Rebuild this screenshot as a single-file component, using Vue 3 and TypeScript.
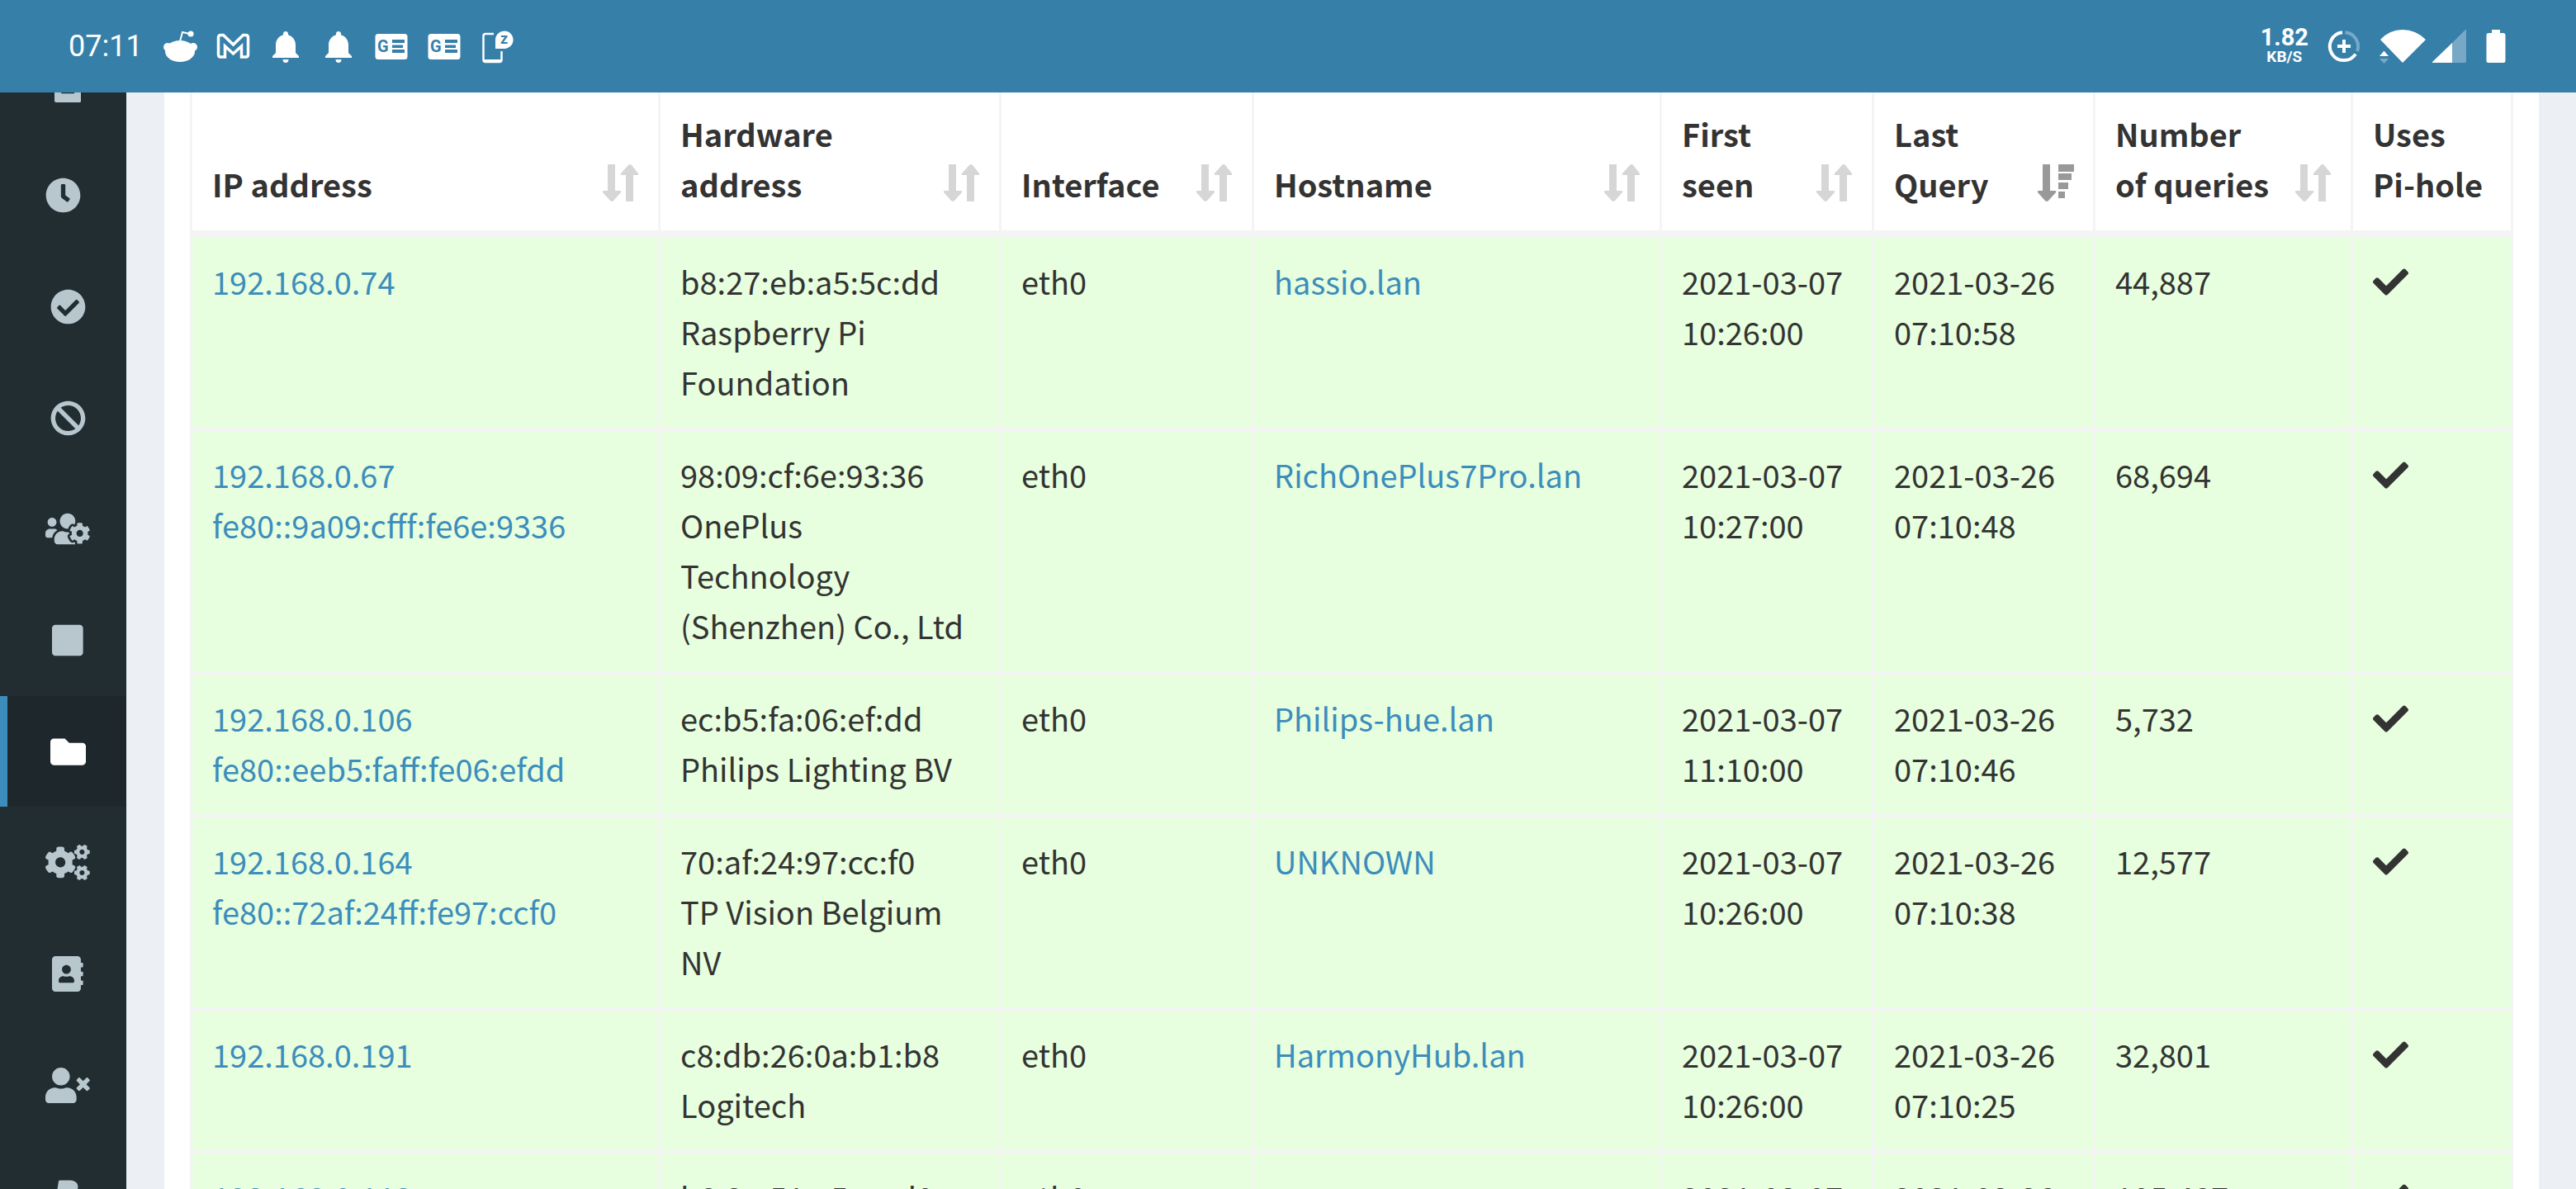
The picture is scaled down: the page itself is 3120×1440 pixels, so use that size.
<script setup lang="ts">
import { ref } from 'vue'

interface NavItem {
  label: string
  width: number
  path: string
  start?: boolean
}

interface Column {
  lines: string[]
  width: number
  sortable: boolean
}

interface Client {
  ips: string[]
  hardware: string[]
  iface: string
  host: string
  first: string[]
  last: string[]
  queries: string
}

const active = ref('Tools')
const sortedBy = ref(5)

const navItems: NavItem[] = [
  { label: 'Query log', width: 384, path: 'M224 136V0H24C10.7 0 0 10.7 0 24v464c0 13.3 10.7 24 24 24h336c13.3 0 24-10.7 24-24V160H248c-13.2 0-24-10.8-24-24zm64 236c0 6.6-5.4 12-12 12H108c-6.6 0-12-5.4-12-12v-8c0-6.6 5.4-12 12-12h168c6.6 0 12 5.4 12 12v8zm0-64c0 6.6-5.4 12-12 12H108c-6.6 0-12-5.4-12-12v-8c0-6.6 5.4-12 12-12h168c6.6 0 12 5.4 12 12v8z' },
  { label: 'Long-term data', width: 512, start: true, path: 'M256,8C119,8,8,119,8,256S119,504,256,504,504,393,504,256,393,8,256,8Zm92.49,313h0l-20,25a16,16,0,0,1-22.49,2.5h0l-67-49.72a40,40,0,0,1-15-31.23V112a16,16,0,0,1,16-16h32a16,16,0,0,1,16,16V256l58,42.5A16,16,0,0,1,348.49,321Z' },
  { label: 'Whitelist', width: 512, path: 'M504 256c0 136.967-111.033 248-248 248S8 392.967 8 256 119.033 8 256 8s248 111.033 248 248zM227.314 387.314l184-184c6.248-6.248 6.248-16.379 0-22.627l-22.627-22.627c-6.248-6.249-16.379-6.249-22.628 0L216 308.118l-70.059-70.059c-6.248-6.248-16.379-6.248-22.628 0l-22.627 22.627c-6.248 6.248-6.248 16.379 0 22.627l104 104c6.249 6.249 16.379 6.249 22.628.001z' },
  { label: 'Blacklist', width: 512, path: 'M256 8C119.034 8 8 119.033 8 256s111.034 248 248 248 248-111.034 248-248S392.967 8 256 8zm130.108 117.892c65.448 65.448 70 165.481 20.677 235.637L150.47 105.216c70.204-49.356 170.226-44.735 235.638 20.676zM125.892 386.108c-65.448-65.448-70-165.481-20.677-235.637L361.53 406.784c-70.203 49.356-170.226 44.736-235.638-20.676z' },
  { label: 'Group management', width: 640, path: 'M610.5 341.3c2.6-14.1 2.6-28.5 0-42.6l25.8-14.9c3-1.7 4.3-5.2 3.3-8.5-6.7-21.6-18.2-41.2-33.2-57.4-2.3-2.5-6-3.1-9-1.4l-25.8 14.9c-10.9-9.3-23.4-16.5-36.9-21.3v-29.8c0-3.4-2.4-6.4-5.7-7.1-22.3-5-45-4.8-66.2 0-3.3.7-5.7 3.7-5.7 7.1v29.8c-13.5 4.8-26 12-36.9 21.3l-25.8-14.9c-2.9-1.7-6.7-1.1-9 1.4-15 16.2-26.5 35.8-33.2 57.4-1 3.3.4 6.8 3.3 8.5l25.8 14.9c-2.6 14.1-2.6 28.5 0 42.6l-25.8 14.9c-3 1.7-4.3 5.2-3.3 8.5 6.7 21.6 18.2 41.1 33.2 57.4 2.3 2.5 6 3.1 9 1.4l25.8-14.9c10.9 9.3 23.4 16.5 36.9 21.3v29.8c0 3.4 2.4 6.4 5.7 7.1 22.3 5 45 4.8 66.2 0 3.3-.7 5.7-3.7 5.7-7.1v-29.8c13.5-4.8 26-12 36.9-21.3l25.8 14.9c2.9 1.7 6.7 1.1 9-1.4 15-16.2 26.5-35.8 33.2-57.4 1-3.3-.4-6.8-3.3-8.5l-25.8-14.9zM496 368.5c-26.8 0-48.5-21.8-48.5-48.5s21.8-48.5 48.5-48.5 48.5 21.8 48.5 48.5-21.7 48.5-48.5 48.5zM96 224c35.3 0 64-28.7 64-64s-28.7-64-64-64-64 28.7-64 64 28.7 64 64 64zm224 32c1.9 0 3.7-.5 5.6-.6 8.3-21.7 20.5-42.1 36.3-59.2 7.4-8 17.9-12.6 28.9-12.6 6.9 0 13.7 1.8 19.6 5.3l7.9 4.6c.8-.5 1.6-.9 2.4-1.4 7-14.6 11.2-30.8 11.2-48 0-61.9-50.1-112-112-112S208 82.1 208 144c0 61.9 50.1 112 112 112zm105.2 194.5c-2.3-1.2-4.6-2.6-6.8-3.9-8.2 4.8-15.3 9.8-27.5 9.8-10.9 0-21.4-4.6-28.9-12.6-18.3-19.8-32.3-43.9-40.2-69.6-10.7-34.5 24.9-49.7 25.8-50.3-.1-2.6-.1-5.2 0-7.8l-7.9-4.6c-3.8-2.2-7-5-9.8-8.1-3.3.2-6.5.6-9.8.6-24.6 0-47.6-6-68.5-16h-8.3C179.6 288 128 339.6 128 403.2V432c0 26.5 21.5 48 48 48h255.4c-3.7-6-6.2-12.8-6.2-20.3v-9.2zM173.1 274.6C161.5 263.1 145.6 256 128 256H64c-35.3 0-64 28.7-64 64v32c0 17.7 14.3 32 32 32h65.9c6.3-47.4 34.9-87.3 75.2-109.4z' },
  { label: 'Disable', width: 448, path: 'M400 32H48C21.5 32 0 53.5 0 80v352c0 26.5 21.5 48 48 48h352c26.5 0 48-21.5 48-48V80c0-26.5-21.5-48-48-48z' },
  { label: 'Tools', width: 512, path: 'M464 128H272l-64-64H48C21.49 64 0 85.49 0 112v288c0 26.51 21.49 48 48 48h416c26.51 0 48-21.49 48-48V176c0-26.51-21.49-48-48-48z' },
  { label: 'Settings', width: 640, path: 'M512.1 191l-8.2 14.3c-3 5.3-9.4 7.5-15.1 5.4-11.8-4.4-22.6-10.7-32.1-18.6-4.6-3.8-5.8-10.5-2.8-15.7l8.2-14.3c-6.9-8-12.3-17.3-15.9-27.4h-16.5c-6 0-11.2-4.3-12.2-10.3-2-12-2.1-24.6 0-37.1 1-6 6.2-10.4 12.2-10.4h16.5c3.6-10.1 9-19.4 15.9-27.4l-8.2-14.3c-3-5.2-1.9-11.9 2.8-15.7 9.5-7.9 20.4-14.2 32.1-18.6 5.7-2.1 12.1.1 15.1 5.4l8.2 14.3c10.5-1.9 21.2-1.9 31.7 0L552 6.3c3-5.3 9.4-7.5 15.1-5.4 11.8 4.4 22.6 10.7 32.1 18.6 4.6 3.8 5.8 10.5 2.8 15.7l-8.2 14.3c6.9 8 12.3 17.3 15.9 27.4h16.5c6 0 11.2 4.3 12.2 10.3 2 12 2.1 24.6 0 37.1-1 6-6.2 10.4-12.2 10.4h-16.5c-3.6 10.1-9 19.4-15.9 27.4l8.2 14.3c3 5.2 1.9 11.9-2.8 15.7-9.5 7.9-20.4 14.2-32.1 18.6-5.7 2.1-12.1-.1-15.1-5.4l-8.2-14.3c-10.4 1.9-21.2 1.9-31.7 0zm-10.5-58.8c38.5 29.6 82.4-14.3 52.8-52.8-38.5-29.7-82.4 14.3-52.8 52.8zM386.3 286.1l33.7 16.8c10.1 5.8 14.5 18.1 10.5 29.1-8.9 24.2-26.4 46.4-42.6 65.8-7.4 8.9-20.2 11.1-30.3 5.3l-29.1-16.8c-16 13.7-34.6 24.6-54.9 31.7v33.6c0 11.6-8.3 21.6-19.7 23.6-24.6 4.2-50.4 4.4-75.9 0-11.5-2-20-11.9-20-23.6V418c-20.3-7.2-38.9-18-54.9-31.7L74 403c-10 5.8-22.9 3.6-30.3-5.3-16.2-19.4-33.3-41.6-42.2-65.7-4-10.9.4-23.2 10.5-29.1l33.3-16.8c-3.9-20.9-3.9-42.4 0-63.4L12 205.8c-10.1-5.8-14.6-18.1-10.5-29 8.9-24.2 26-46.4 42.2-65.8 7.4-8.9 20.2-11.1 30.3-5.3l29.1 16.8c16-13.7 34.6-24.6 54.9-31.7V57.1c0-11.5 8.2-21.5 19.6-23.5 24.6-4.2 50.5-4.4 76-.1 11.5 2 20 11.9 20 23.6v33.6c20.3 7.2 38.9 18 54.9 31.7l29.1-16.8c10-5.8 22.9-3.6 30.3 5.3 16.2 19.4 33.2 41.6 42.1 65.8 4 10.9.1 23.2-10 29.1l-33.7 16.8c3.9 21 3.9 42.5 0 63.5zm-117.6 21.1c59.2-77-28.7-164.9-105.7-105.7-59.2 77 28.7 164.9 105.7 105.7zm243.4 182.7l-8.2 14.3c-3 5.3-9.4 7.5-15.1 5.4-11.8-4.4-22.6-10.7-32.1-18.6-4.6-3.8-5.8-10.5-2.8-15.7l8.2-14.3c-6.9-8-12.3-17.3-15.9-27.4h-16.5c-6 0-11.2-4.3-12.2-10.3-2-12-2.1-24.6 0-37.1 1-6 6.2-10.4 12.2-10.4h16.5c3.6-10.1 9-19.4 15.9-27.4l-8.2-14.3c-3-5.2-1.9-11.9 2.8-15.7 9.5-7.9 20.4-14.2 32.1-18.6 5.7-2.1 12.1.1 15.1 5.4l8.2 14.3c10.5-1.9 21.2-1.9 31.7 0l8.2-14.3c3-5.3 9.4-7.5 15.1-5.4 11.8 4.4 22.6 10.7 32.1 18.6 4.6 3.8 5.8 10.5 2.8 15.7l-8.2 14.3c6.9 8 12.3 17.3 15.9 27.4h16.5c6 0 11.2 4.3 12.2 10.3 2 12 2.1 24.6 0 37.1-1 6-6.2 10.4-12.2 10.4h-16.5c-3.6 10.1-9 19.4-15.9 27.4l8.2 14.3c3 5.2 1.9 11.9-2.8 15.7-9.5 7.9-20.4 14.2-32.1 18.6-5.7 2.1-12.1-.1-15.1-5.4l-8.2-14.3c-10.4 1.9-21.2 1.9-31.7 0zM501.6 431c38.5 29.6 82.4-14.3 52.8-52.8-38.5-29.6-82.4 14.3-52.8 52.8z' },
  { label: 'Local DNS records', width: 448, path: 'M436 160c6.6 0 12-5.4 12-12v-40c0-6.6-5.4-12-12-12h-20V48c0-26.5-21.5-48-48-48H48C21.5 0 0 21.5 0 48v416c0 26.5 21.5 48 48 48h320c26.5 0 48-21.5 48-48v-48h20c6.6 0 12-5.4 12-12v-40c0-6.6-5.4-12-12-12h-20v-64h20c6.6 0 12-5.4 12-12v-40c0-6.6-5.4-12-12-12h-20v-64h20zm-228-32c35.3 0 64 28.7 64 64s-28.7 64-64 64-64-28.7-64-64 28.7-64 64-64zm112 236.8c0 10.6-10 19.2-22.4 19.2H118.4C106 384 96 375.4 96 364.8v-19.2c0-31.8 30.1-57.6 67.2-57.6h5c12.3 5.1 25.7 8 39.8 8s27.6-2.9 39.8-8h5c37.1 0 67.2 25.8 67.2 57.6v19.2z' },
  { label: 'Logout', width: 640, path: 'M589.6 240l45.6-45.6c6.3-6.3 6.3-16.5 0-22.8l-22.8-22.8c-6.3-6.3-16.5-6.3-22.8 0L544 194.4l-45.6-45.6c-6.3-6.3-16.5-6.3-22.8 0l-22.8 22.8c-6.3 6.3-6.3 16.5 0 22.8l45.6 45.6-45.6 45.6c-6.3 6.3-6.3 16.5 0 22.8l22.8 22.8c6.3 6.3 16.5 6.3 22.8 0l45.6-45.6 45.6 45.6c6.3 6.3 16.5 6.3 22.8 0l22.8-22.8c6.3-6.3 6.3-16.5 0-22.8L589.6 240zM224 256c70.7 0 128-57.3 128-128S294.7 0 224 0 96 57.3 96 128s57.3 128 128 128zm89.6 32h-16.7c-22.2 10.2-46.9 16-72.9 16s-50.6-5.8-72.9-16h-16.7C60.2 288 0 348.2 0 422.4V464c0 26.5 21.5 48 48 48h352c26.5 0 48-21.5 48-48v-41.6c0-74.2-60.2-134.4-134.4-134.4z' },
  { label: 'Donate', width: 384, path: 'M111.4 295.9c-3.5 19.2-17.4 108.7-21.5 134-.3 1.8-1 2.5-3 2.5H12.3c-7.6 0-13.1-6.6-12.1-13.9L58.8 46.6c1.5-9.6 10.1-16.9 20-16.9 152.3 0 165.1-3.7 204 11.4 60.1 23.3 65.6 79.5 44 140.3-21.5 62.6-72.5 89.5-140.1 90.3-43.4.7-69.5-7-75.3 24.2zM357.1 152c-1.8-1.3-2.5-1.8-3 1.3-2 11.4-5.1 22.5-8.8 33.6-39.9 113.8-150.5 103.9-204.5 103.9-6.1 0-10.1 3.3-10.9 9.4-22.6 140.4-27.1 169.7-27.1 169.7-1 7.1 3.5 12.9 10.6 12.9h63.5c8.6 0 15.7-6.3 17.4-14.9.7-5.4-1.1 6.1 14.4-91.3 4.6-22 14.3-19.7 29.3-19.7 71 0 126.4-28.8 142.9-112.3 6.5-34.8 4.6-71.4-23.8-92.6z' },
]

const columns: Column[] = [
  { lines: ['IP address'], width: 567, sortable: true },
  { lines: ['Hardware', 'address'], width: 413, sortable: true },
  { lines: ['Interface'], width: 306, sortable: true },
  { lines: ['Hostname'], width: 494, sortable: true },
  { lines: ['First', 'seen'], width: 257, sortable: true },
  { lines: ['Last', 'Query'], width: 268, sortable: true },
  { lines: ['Number', 'of queries'], width: 312, sortable: true },
  { lines: ['Uses', 'Pi-hole'], width: 197, sortable: false },
]

const clients: Client[] = [
  { ips: ['192.168.0.74'], hardware: ['b8:27:eb:a5:5c:dd', 'Raspberry Pi Foundation'], iface: 'eth0', host: 'hassio.lan', first: ['2021-03-07', '10:26:00'], last: ['2021-03-26', '07:10:58'], queries: '44,887' },
  { ips: ['192.168.0.67', 'fe80::9a09:cfff:fe6e:9336'], hardware: ['98:09:cf:6e:93:36', 'OnePlus Technology (Shenzhen) Co., Ltd'], iface: 'eth0', host: 'RichOnePlus7Pro.lan', first: ['2021-03-07', '10:27:00'], last: ['2021-03-26', '07:10:48'], queries: '68,694' },
  { ips: ['192.168.0.106', 'fe80::eeb5:faff:fe06:efdd'], hardware: ['ec:b5:fa:06:ef:dd', 'Philips Lighting BV'], iface: 'eth0', host: 'Philips-hue.lan', first: ['2021-03-07', '11:10:00'], last: ['2021-03-26', '07:10:46'], queries: '5,732' },
  { ips: ['192.168.0.164', 'fe80::72af:24ff:fe97:ccf0'], hardware: ['70:af:24:97:cc:f0', 'TP Vision Belgium NV'], iface: 'eth0', host: 'UNKNOWN', first: ['2021-03-07', '10:26:00'], last: ['2021-03-26', '07:10:38'], queries: '12,577' },
  { ips: ['192.168.0.191'], hardware: ['c8:db:26:0a:b1:b8', 'Logitech'], iface: 'eth0', host: 'HarmonyHub.lan', first: ['2021-03-07', '10:26:00'], last: ['2021-03-26', '07:10:25'], queries: '32,801' },
  { ips: ['192.168.0.112'], hardware: ['b8:2a:51:a5:cc:d0'], iface: 'eth0', host: '', first: ['2021-03-07'], last: ['2021-03-26'], queries: '105,487' },
]
</script>

<template>
  <div class="screen">
    <header class="status">
      <div class="status-left">
        <time class="clock">07:11</time>
        <div class="notes">
          <svg viewBox="0 0 48 48" aria-label="Reddit">
            <ellipse cx="24" cy="30" rx="18" ry="13" />
            <circle cx="9" cy="25" r="5" />
            <circle cx="40" cy="25" r="5" />
            <path d="M24 18 27 7l9 2" fill="none" stroke="#fff" stroke-width="2" />
            <circle cx="37" cy="9" r="3.6" />
          </svg>
          <svg viewBox="0 0 48 48" aria-label="Gmail">
            <path d="M9.5 10.5h3L24.500 22 36.500 10.500h3q3 0 3 3V34q0 3-2.500 3h-5.500V24l-10 9-10-9v13H9q-2.500 0-2.500-3V13.500q0-3 3-3z" fill="none" stroke="#fff" stroke-width="3.500" />
          </svg>
          <svg v-for="n in 2" :key="n" viewBox="0 0 48 48" aria-label="Notification">
            <path d="M24 6c-1.800 0-3 1.300-3 3v1.200C15.500 11.700 12 16.500 12 22.500V32l-4 4v2h32v-2l-4-4v-9.500c0-6-3.500-10.800-9-12.300V9c0-1.700-1.200-3-3-3zM20.500 40a3.500 4 0 0 0 7 0z" />
          </svg>
          <svg v-for="n in 2" :key="'news' + n" viewBox="0 0 48 48" aria-label="News">
            <rect x="4.500" y="9" width="39" height="31" rx="3.500" />
            <text x="7" y="31" class="news-g">G</text>
            <path d="M25 16h15v4H25zM25 22.500h13v3.500H25zM25 28h15v4H25z" fill="#367fa9" />
          </svg>
          <svg viewBox="0 0 48 48" aria-label="Phone sleeping">
            <path d="M20 9H10q-2.500 0-2.500 2.500v29Q7.500 43 10 43h17q2.500 0 2.500-2.500V30" fill="none" stroke="#fff" stroke-width="2.500" />
            <path d="M8 40h21v4H10z" />
            <path d="M22 27V16a10.800 10.800 0 1 1 10.800 11z" />
            <text x="28" y="21" class="sleep-z">z</text>
          </svg>
        </div>
      </div>
      <div class="status-right">
        <div class="speed"><span class="rate">1.82</span><span class="unit">KB/S</span></div>
        <svg width="40" height="40" viewBox="0 0 40 40" aria-label="Data saver">
          <path d="M18 3.200A17 17 0 1 0 34 29.500" fill="none" stroke="#fff" stroke-width="4" />
          <path d="M21.500 3.200A17 17 0 0 1 36 26" fill="none" stroke="#77a9c6" stroke-width="4" />
          <path d="M18 12h4v6h6v4h-6v6h-4v-6h-6v-4h6z" />
        </svg>
        <div class="signals">
          <svg width="56" height="42" viewBox="0 0 56 42" aria-label="Wi-Fi">
            <path d="M28 41 1 13Q12 1 28 1t28 12z" />
            <path d="M5.500 26 12 33.500H-1z" stroke="#367fa9" stroke-width="1" />
            <path d="M0 36h11l-5.500 6z" fill="#77a9c6" />
          </svg>
          <svg width="42" height="42" viewBox="0 0 42 42" aria-label="Mobile signal">
            <path d="M0 40 24 17v24H1q-1.500 0-1-1z" />
            <path d="M24 17 39.500 1.500Q41 0 41 2v37q0 2-2 2H24z" fill="#77a9c6" />
          </svg>
        </div>
        <svg width="24" height="42" viewBox="0 0 24 42" aria-label="Battery">
          <path d="M7 1h10v4h4q2.500 0 2.500 2.500v31Q23.500 41 21 41H3Q.5 41 .5 38.500v-31Q.5 5 3 5h4z" />
        </svg>
      </div>
    </header>

    <div class="body">
      <nav class="sidebar" aria-label="Main">
        <ul>
          <li v-for="item in navItems" :key="item.label">
            <a
              href="#"
              :aria-label="item.label"
              :class="{ active: item.label === active, start: item.start }"
              @click.prevent="active = item.label"
            >
              <svg height="43" :viewBox="`0 0 ${item.width} 512`"><path :d="item.path" /></svg>
            </a>
          </li>
        </ul>
      </nav>

      <main class="content">
        <section class="box">
          <table>
            <colgroup>
              <col v-for="(c, i) in columns" :key="i" :style="{ width: c.width + 'px' }" />
            </colgroup>
            <thead>
              <tr>
                <th v-for="(c, i) in columns" :key="i" scope="col">
                  <button v-if="c.sortable" type="button" @click="sortedBy = i">
                    <span><template v-for="(l, j) in c.lines" :key="j"><br v-if="j" />{{ l }}</template></span>
                    <svg v-if="sortedBy === i" class="sort on" viewBox="0 0 44 45">
                      <path d="M6 0h9v32h6q2 0 1 2l-9 10q-2 2-4 0L0 34q-1-2 1-2h5zM25 0h19v9H25zM25 11h16v8H25zM25 22h12v8H25zM25 33h8v8h-8z" />
                    </svg>
                    <svg v-else class="sort" viewBox="0 0 44 45">
                      <path d="M6 0h9v32h6q2 0 1 2l-9 10q-2 2-4 0L0 34q-1-2 1-2h5zM28 45V13h-5q-2 0-1-2l9-10q2-2 4 0l8 10q1 2-1 2h-5v32z" />
                    </svg>
                  </button>
                  <span v-else><template v-for="(l, j) in c.lines" :key="j"><br v-if="j" />{{ l }}</template></span>
                </th>
              </tr>
            </thead>
            <tbody>
              <tr v-for="client in clients" :key="client.ips[0]">
                <td><a v-for="ip in client.ips" :key="ip" href="#" class="line">{{ ip }}</a></td>
                <td><span v-for="h in client.hardware" :key="h" class="line">{{ h }}</span></td>
                <td>{{ client.iface }}</td>
                <td><a v-if="client.host" href="#">{{ client.host }}</a></td>
                <td><span v-for="f in client.first" :key="f" class="line">{{ f }}</span></td>
                <td><span v-for="l in client.last" :key="l" class="line">{{ l }}</span></td>
                <td>{{ client.queries }}</td>
                <td>
                  <svg class="check" viewBox="0 0 512 512" aria-label="Yes"><path d="M173.898 439.404l-166.400-166.400c-9.997-9.997-9.997-26.206 0-36.204l36.203-36.204c9.997-9.998 26.207-9.998 36.204 0L192 312.690 432.095 72.596c9.997-9.997 26.207-9.997 36.204 0l36.203 36.204c9.997 9.997 9.997 26.206 0 36.204l-294.400 294.401c-9.998 9.997-26.207 9.997-36.204-.001z" /></svg>
                </td>
              </tr>
            </tbody>
          </table>
        </section>
      </main>
    </div>
  </div>
</template>

<style>
body {
  margin: 0;
  background: #ecf0f5;
}
</style>

<style scoped>
* {
  box-sizing: border-box;
}

svg {
  display: block;
  flex: none;
  fill: currentColor;
}

.screen {
  display: flex;
  flex-direction: column;
  height: 100vh;
  overflow: hidden;
  font-family: "Noto Sans CJK SC", "Noto Sans", sans-serif;
  font-size: 38px;
  line-height: 61px;
  color: #333;
}

.status {
  flex: none;
  display: flex;
  align-items: center;
  justify-content: space-between;
  height: 112px;
  padding: 0 85px 0 83px;
  background: #367fa9;
  color: #fff;
  font-family: Roboto, sans-serif;
}

.status-left,
.status-right,
.signals,
.notes {
  display: flex;
  align-items: center;
}

.clock {
  width: 111px;
  font-size: 36px;
  line-height: 48px;
}

.notes {
  gap: 16px;
}

.notes svg {
  width: 48px;
  height: 48px;
}

.news-g {
  fill: #367fa9;
  font-size: 20px;
  font-weight: 700;
}

.sleep-z {
  fill: #367fa9;
  font-size: 18px;
  font-weight: 700;
}

.status-right {
  gap: 23px;
}

.signals {
  gap: 8px;
}

.speed {
  display: flex;
  flex-direction: column;
  align-items: center;
  font-weight: 700;
}

.rate {
  font-size: 29px;
  line-height: 26px;
}

.unit {
  font-size: 19px;
  line-height: 22px;
}

.body {
  flex: 1;
  min-height: 0;
  display: flex;
}

.sidebar {
  flex: none;
  width: 153px;
  overflow: hidden;
  background: #222d32;
}

.sidebar ul {
  display: flex;
  flex-direction: column;
  height: 1481px;
  margin: -77px 0 0;
  padding: 0;
  list-style: none;
}

.sidebar li {
  flex: 1;
  display: flex;
}

.sidebar a {
  flex: 1;
  display: flex;
  align-items: center;
  justify-content: center;
  padding: 0 44px 0 46px;
  border-left: 9px solid transparent;
  color: #b8c7ce;
}

.sidebar a.start {
  justify-content: flex-start;
}

.sidebar a.active {
  border-left-color: #3c8dbc;
  background: #1e282c;
  color: #fff;
}

.content {
  flex: 1;
  min-width: 0;
  padding: 0 45px 0 46px;
  background: #ecf0f5;
}

.box {
  padding: 0 31px;
  background: #fff;
}

table {
  width: 100%;
  table-layout: fixed;
  border-collapse: separate;
  border-spacing: 0;
}

th,
td {
  padding: 22px 30px 25px 24px;
  border-left: 3px solid #f4f4f4;
  text-align: left;
}

th:last-child,
td:last-child {
  border-right: 3px solid #f4f4f4;
}

th {
  padding: 19px 23px 26px 24px;
  border-bottom: 9px solid #f4f4f4;
  vertical-align: bottom;
}

th button {
  display: flex;
  align-items: flex-end;
  justify-content: space-between;
  width: 100%;
  padding: 0;
  border: 0;
  background: none;
  color: inherit;
  font: inherit;
  text-align: left;
  white-space: nowrap;
  cursor: pointer;
}

.sort {
  width: 44px;
  height: 45px;
  margin-bottom: 9px;
  color: #d6d6d6;
}

.sort.on {
  color: #999;
}

td {
  border-bottom: 4px solid #f4f4f4;
  background: #e7ffde;
  vertical-align: top;
}

td a {
  color: #3c8dbc;
  text-decoration: none;
}

.line {
  display: block;
}

.check {
  width: 43px;
  height: 43px;
  margin-top: 10px;
}
</style>
